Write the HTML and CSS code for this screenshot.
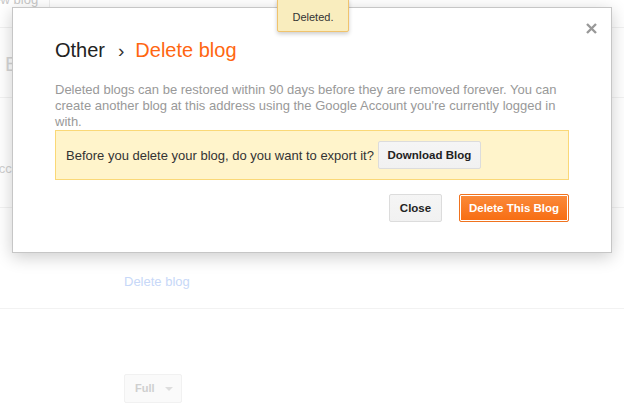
FILE: index.html
```html
<!DOCTYPE html>
<html>
<head>
<meta charset="utf-8">
<link rel="stylesheet" href="styles.css">
</head>
<body>
<div class="page">
  <div class="topbar">
    <div class="topbar-cell">New blog</div>
  </div>
  <div class="section s1">
    <div class="side-head">Basic</div>
  </div>
  <div class="section s2">
    <div class="side-label">Access</div>
  </div>
  <div class="section s3">
    <a class="faded-link">Delete blog</a>
  </div>
  <div class="section s4">
    <div class="faded-select">Full <span class="caret"></span></div>
  </div>
</div>

<div class="dialog">
  <div class="close-x">
    <svg width="11" height="11" viewBox="0 0 11 11"><path d="M1 1L10 10M10 1L1 10" stroke="#999" stroke-width="2.4" fill="none"/></svg>
  </div>
  <h1 class="title"><span class="crumb">Other</span><span class="sep">›</span><span class="current">Delete blog</span></h1>
  <p class="desc">Deleted blogs can be restored within 90 days before they are removed forever. You can create another blog at this address using the Google Account you're currently logged in with.</p>
  <div class="notice">
    <span>Before you delete your blog, do you want to export it?</span>
    <button class="btn btn-download">Download Blog</button>
  </div>
  <div class="actions">
    <button class="btn btn-close">Close</button>
    <button class="btn btn-orange">Delete This Blog</button>
  </div>
</div>

<div class="toast">Deleted.</div>
</body>
</html>
```

FILE: styles.css
```css
html, body {
  margin: 0;
  padding: 0;
  background: #fff;
  font-family: "Liberation Sans", Arial, sans-serif;
  width: 624px;
  height: 416px;
  overflow: hidden;
  position: relative;
}

.page {
  display: flex;
  flex-direction: column;
}

.topbar {
  height: 28px;
  border-bottom: 1px solid #f1f1f1;
  display: flex;
  box-sizing: border-box;
}

.topbar-cell {
  width: 49px;
  border-right: 1px solid #eee;
  color: #c8c8c8;
  font-size: 13px;
  line-height: 13px;
  margin-top: -7px;
  text-indent: -16px;
  overflow: hidden;
  white-space: nowrap;
}

.section {
  border-bottom: 1px solid #f2f2f2;
  box-sizing: border-box;
  position: relative;
}

.s1 { height: 70px; }
.s2 { height: 110px; }
.s3 { height: 101px; }
.s4 { height: 107px; border-bottom: none; }

.side-head {
  color: #d6d6d6;
  font-size: 20px;
  padding: 25px 0 0 5px;
}

.side-label {
  color: #d0d0d0;
  font-size: 13px;
  padding: 63px 0 0 0;
  margin-left: -10px;
  white-space: nowrap;
}

.faded-link {
  display: block;
  color: #c7d8f8;
  font-size: 13px;
  padding: 66px 0 0 124px;
}

.faded-select {
  margin: 65px 0 0 124px;
  width: 58px;
  height: 29px;
  box-sizing: border-box;
  border: 1px solid #f1f1f1;
  background: #fafafa;
  color: #cfcfcf;
  font-size: 11px;
  font-weight: bold;
  line-height: 27px;
  padding-left: 10px;
  border-radius: 2px;
}

.caret {
  display: inline-block;
  margin-left: 7px;
  width: 0;
  height: 0;
  border-left: 4px solid transparent;
  border-right: 4px solid transparent;
  border-top: 4px solid #ddd;
  vertical-align: middle;
}

.dialog {
  position: absolute;
  left: 12px;
  top: 7px;
  width: 600px;
  height: 246px;
  box-sizing: border-box;
  background: #fff;
  border: 1px solid #c6c6c6;
  box-shadow: 0 4px 16px rgba(0, 0, 0, 0.2);
  padding: 28px 42px 0 42px;
}

.close-x {
  position: absolute;
  right: 14px;
  top: 15px;
  width: 11px;
  height: 11px;
  display: flex;
}

.title {
  margin: 0;
  font-size: 20px;
  font-weight: normal;
  line-height: 28px;
  color: #222;
  display: flex;
  align-items: baseline;
}

.sep {
  margin: 0 11px 0 13px;
  font-size: 19px;
  color: #333;
}

.current {
  color: #ff6611;
}

.desc {
  margin: 17px 0 0 0;
  font-size: 13px;
  line-height: 16px;
  color: #999;
}

.notice {
  margin-top: 0;
  height: 50px;
  box-sizing: border-box;
  background: #fff4cb;
  border: 1px solid #fad877;
  display: flex;
  align-items: center;
  padding: 0 10px;
  font-size: 13px;
  color: #333;
  gap: 4px;
}

.btn {
  font-family: "Liberation Sans", Arial, sans-serif;
  font-size: 11.5px;
  font-weight: bold;
  color: #222;
  height: 28px;
  padding: 0;
  border: 1px solid #dcdcdc;
  border-radius: 2px;
  background: linear-gradient(#f5f5f5, #f1f1f1);
  cursor: default;
  text-align: center;
}

.btn-download { width: 103px; }
.btn-close { width: 53px; }

.actions {
  display: flex;
  justify-content: flex-end;
  gap: 17px;
  margin-top: 14px;
}

.btn-orange {
  width: 110px;
  color: #fff;
  border: 1px solid #f0731f;
  background: linear-gradient(#fb8a3a, #f76d12);
  box-shadow: inset 0 0 0 1px #fff;
}

.toast {
  position: absolute;
  left: 277px;
  top: -2px;
  width: 72px;
  height: 34px;
  box-sizing: border-box;
  background: #f9edbe;
  border: 1px solid #f0c36d;
  border-radius: 2px;
  box-shadow: 0 2px 4px rgba(0, 0, 0, 0.2);
  font-size: 11px;
  color: #333;
  display: flex;
  align-items: center;
  justify-content: center;
  padding-top: 3px;
}
```
